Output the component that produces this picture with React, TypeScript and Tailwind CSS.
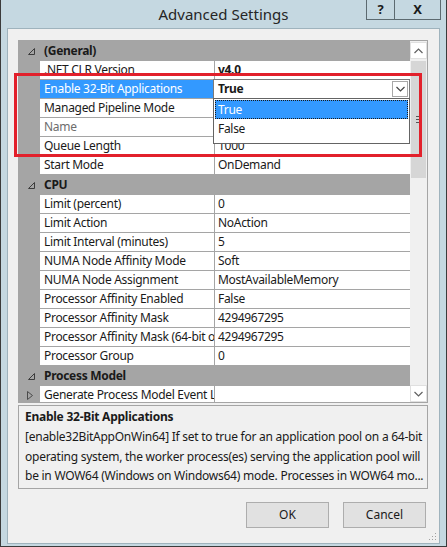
import React from "react";

type Row =
  | { kind: "cat"; label: string }
  | {
      kind: "prop";
      name: string;
      value: string;
      bold?: boolean;
      selected?: boolean;
      disabled?: boolean;
      collapsed?: boolean;
    };

const rows: Row[] = [
  { kind: "cat", label: "(General)" },
  { kind: "prop", name: ".NET CLR Version", value: "v4.0", bold: true },
  { kind: "prop", name: "Enable 32-Bit Applications", value: "True", selected: true },
  { kind: "prop", name: "Managed Pipeline Mode", value: "" },
  { kind: "prop", name: "Name", value: "", disabled: true },
  { kind: "prop", name: "Queue Length", value: "1000" },
  { kind: "prop", name: "Start Mode", value: "OnDemand" },
  { kind: "cat", label: "CPU" },
  { kind: "prop", name: "Limit (percent)", value: "0" },
  { kind: "prop", name: "Limit Action", value: "NoAction" },
  { kind: "prop", name: "Limit Interval (minutes)", value: "5" },
  { kind: "prop", name: "NUMA Node Affinity Mode", value: "Soft" },
  { kind: "prop", name: "NUMA Node Assignment", value: "MostAvailableMemory" },
  { kind: "prop", name: "Processor Affinity Enabled", value: "False" },
  { kind: "prop", name: "Processor Affinity Mask", value: "4294967295" },
  { kind: "prop", name: "Processor Affinity Mask (64-bit option)", value: "4294967295" },
  { kind: "prop", name: "Processor Group", value: "0" },
  { kind: "cat", label: "Process Model" },
  { kind: "prop", name: "Generate Process Model Event Log Entry", value: "", collapsed: true },
];

const font = { fontFamily: '"Noto Sans", "Liberation Sans", sans-serif' };

function ExpandedGlyph() {
  return (
    <svg width="7" height="7" viewBox="0 0 7 7" className="block">
      <path d="M6.5 0.5 L6.5 6.5 L0.5 6.5 Z" fill="none" stroke="#3c3c3c" strokeWidth="1" />
    </svg>
  );
}

function CollapsedGlyph() {
  return (
    <svg width="6" height="9" viewBox="0 0 6 9" className="block">
      <path d="M0.5 0.5 L5.5 4.5 L0.5 8.5 Z" fill="none" stroke="#4a4a4a" strokeWidth="1" />
    </svg>
  );
}

function Chevron({ up = false, color = "#555" }: { up?: boolean; color?: string }) {
  return (
    <svg width="9" height="6" viewBox="0 0 9 6" className="block">
      <path
        d={up ? "M0.5 5 L4.5 1 L8.5 5" : "M0.5 1 L4.5 5 L8.5 1"}
        fill="none"
        stroke={color}
        strokeWidth="1.2"
      />
    </svg>
  );
}

function GridRow({ row }: { row: Row }) {
  if (row.kind === "cat") {
    return (
      <div className="flex h-[20px] shrink-0 items-center bg-[#a5a5a5]">
        <div className="flex w-[21px] shrink-0 justify-end pr-[5px] pt-[1px]">
          <ExpandedGlyph />
        </div>
        <div className="pl-[4px] text-[12px] font-bold tracking-[-0.3px] text-[#1a1a1a]">
          {row.label}
        </div>
      </div>
    );
  }
  return (
    <div className="flex h-[19px] shrink-0">
      <div className="flex w-[21px] shrink-0 items-center justify-end bg-[#a5a5a5] pr-[7px]">
        {row.collapsed ? <CollapsedGlyph /> : null}
      </div>
      <div
        className={
          "flex w-[175px] shrink-0 items-center overflow-hidden whitespace-nowrap border-b border-r border-[#a5a5a5] pl-[4px] text-[12px] tracking-[-0.3px] " +
          (row.selected
            ? "bg-[#3399ff] text-white"
            : row.disabled
            ? "bg-white text-[#6d6d6d]"
            : "bg-white text-[#1a1a1a]")
        }
      >
        {row.name}
      </div>
      <div
        className={
          "flex w-[195px] shrink-0 items-center overflow-hidden whitespace-nowrap border-b border-[#a5a5a5] bg-white pl-[3px] text-[12px] tracking-[-0.3px] text-[#1a1a1a] " +
          (row.bold ? "font-bold" : "")
        }
      >
        {row.value}
      </div>
    </div>
  );
}

export default function App() {
  return (
    <div
      className="flex h-[547px] w-[447px] flex-col border-x border-b border-[#3b3b3b] bg-[#c5d8e1]"
      style={font}
    >
      {/* Title bar */}
      <div className="grid h-[28px] shrink-0 grid-cols-[1fr_auto_1fr]">
        <div />
        <div className="pt-[3px] text-[15px] text-[#262626]">Advanced Settings</div>
        <div className="flex items-start justify-end pr-[5px]">
          <div className="flex h-[20px] w-[29px] items-center justify-center border-x border-b border-[#5c6a70] text-[13px] font-bold text-[#1a1a1a]">
            ?
          </div>
          <div className="flex h-[20px] w-[46px] items-center justify-center border-r border-b border-[#5c6a70] text-[13px] font-bold text-[#1a1a1a]">
            X
          </div>
        </div>
      </div>

      {/* Client area */}
      <div className="relative mx-[6px] mb-[2px] flex flex-1 flex-col border border-[#9fb3bd] bg-[#f0f0f0] pl-[10px] pr-[12px] pt-[11px]">
        {/* Property grid */}
        <div className="relative h-[363px] w-[410px] shrink-0">
          <div className="flex h-full w-full overflow-hidden border border-[#a5a5a5]">
            <div className="flex w-[391px] shrink-0 flex-col overflow-hidden">
              {rows.map((r, i) => (
                <GridRow key={i} row={r} />
              ))}
            </div>
            {/* Scrollbar */}
            <div className="flex w-[17px] shrink-0 flex-col bg-[#f0f0f0]">
              <div className="mt-[1px] flex h-[17px] items-center justify-center border border-[#e0e0e0] bg-white">
                <Chevron up color="#606060" />
              </div>
              <div className="mx-[1px] mt-[2px] flex h-[117px] items-center justify-center bg-[#d6d6d6]">
                <div className="flex flex-col gap-[2px]">
                  <div className="h-[1px] w-[6px] bg-[#555]" />
                  <div className="h-[1px] w-[6px] bg-[#555]" />
                  <div className="h-[1px] w-[6px] bg-[#555]" />
                </div>
              </div>
              <div className="flex-1" />
              <div className="flex h-[17px] items-center justify-center border border-[#e0e0e0] bg-white">
                <Chevron color="#606060" />
              </div>
            </div>
          </div>

          {/* Combo box in selected value cell */}
          <div className="absolute left-[195px] top-[39px] flex h-[20px] w-[197px] items-center border border-[#7a7a7a] bg-white pl-[4px] text-[12px] font-bold tracking-[-0.3px] text-[#1a1a1a]">
            <span className="flex-1">True</span>
            <div className="mr-[1px] flex h-[16px] w-[16px] items-center justify-center border border-[#a8a8a8] bg-white">
              <Chevron color="#444" />
            </div>
          </div>

          {/* Dropdown list */}
          <div className="absolute left-[195px] top-[58px] flex h-[46px] w-[197px] flex-col border border-[#646464] bg-white p-[1px] text-[12px] tracking-[-0.3px]">
            <div className="flex h-[19px] items-center border border-dotted border-[#1a1a1a] bg-[#3399ff] pl-[2px] text-white">
              True
            </div>
            <div className="flex h-[19px] items-center pl-[3px] text-[#1a1a1a]">False</div>
          </div>

          {/* Red highlight rectangle */}
          <div className="pointer-events-none absolute left-[-4px] top-[33px] h-[84px] w-[408px] border-[3px] border-[#e2202b]" />
        </div>

        {/* Description */}
        <div className="mt-[2px] h-[84px] w-[410px] shrink-0 border border-[#a5a5a5] bg-[#f0f0f0] px-[6px] text-[12px] tracking-[-0.25px] text-[#1a1a1a]">
          <div className="h-[21px] font-bold leading-[21px]">Enable 32-Bit Applications</div>
          <div className="whitespace-nowrap leading-[19.5px]">
            <div>[enable32BitAppOnWin64] If set to true for an application pool on a 64-bit</div>
            <div>operating system, the worker process(es) serving the application pool will</div>
            <div>be in WOW64 (Windows on Windows64) mode. Processes in WOW64 mo...</div>
          </div>
        </div>

        {/* Buttons */}
        <div className="mt-[13px] flex justify-end gap-[14px] pr-[1px]">
          <button className="h-[26px] w-[83px] border border-[#adadad] bg-[#e1e1e1] text-[12px] text-[#1a1a1a]">
            OK
          </button>
          <button className="h-[26px] w-[83px] border border-[#adadad] bg-[#e1e1e1] text-[12px] text-[#1a1a1a]">
            Cancel
          </button>
        </div>

        {/* Size grip */}
        <svg className="absolute bottom-[1px] right-[1px]" width="10" height="10" viewBox="0 0 10 10">
          <rect x="7" y="1" width="1" height="1" fill="#a0a0a0" />
          <rect x="4" y="4" width="1" height="1" fill="#a0a0a0" />
          <rect x="7" y="4" width="1" height="1" fill="#a0a0a0" />
          <rect x="1" y="7" width="1" height="1" fill="#a0a0a0" />
          <rect x="4" y="7" width="1" height="1" fill="#a0a0a0" />
          <rect x="7" y="7" width="1" height="1" fill="#a0a0a0" />
        </svg>
      </div>
    </div>
  );
}
